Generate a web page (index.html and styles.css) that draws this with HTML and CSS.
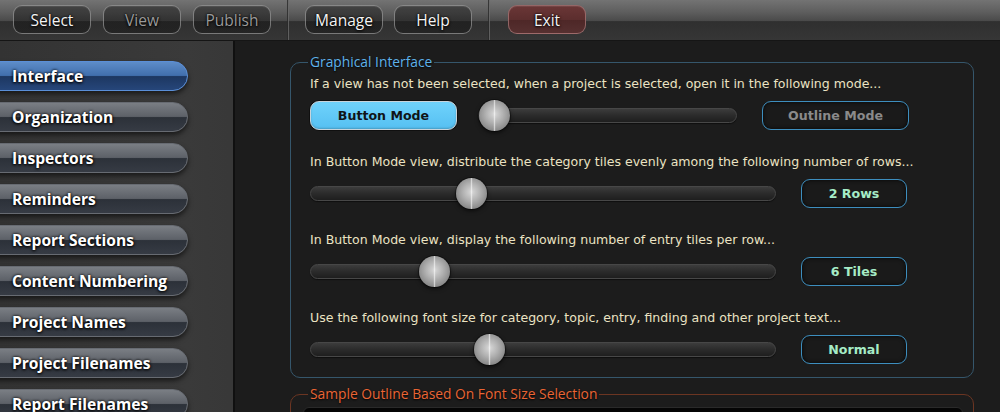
FILE: index.html
```html
<!DOCTYPE html>
<html>
<head>
<meta charset="utf-8">
<link rel="stylesheet" href="styles.css">
</head>
<body>
<div class="app">
  <header class="topbar">
    <div class="group g1">
      <button class="tb">Select</button>
      <button class="tb dis">View</button>
      <button class="tb dis">Publish</button>
    </div>
    <div class="sep"></div>
    <div class="group g2">
      <button class="tb">Manage</button>
      <button class="tb">Help</button>
    </div>
    <div class="sep"></div>
    <div class="group g3">
      <button class="tb exit">Exit</button>
    </div>
  </header>
  <div class="body">
    <nav class="sidebar">
      <div class="pill active">Interface</div>
      <div class="pill">Organization</div>
      <div class="pill">Inspectors</div>
      <div class="pill">Reminders</div>
      <div class="pill">Report Sections</div>
      <div class="pill">Content Numbering</div>
      <div class="pill">Project Names</div>
      <div class="pill">Project Filenames</div>
      <div class="pill">Report Filenames</div>
    </nav>
    <main class="main">
      <fieldset class="box blue">
        <legend>Graphical Interface</legend>
        <div class="sect">
          <p class="q">If a view has not been selected, when a project is selected, open it in the following mode...</p>
          <div class="row">
            <div class="mode on">Button Mode</div>
            <div class="slider s1"><div class="knob" style="left:0px"></div></div>
            <div class="mode off">Outline Mode</div>
          </div>
        </div>
        <div class="sect">
          <p class="q">In Button Mode view, distribute the category tiles evenly among the following number of rows...</p>
          <div class="row">
            <div class="slider s2"><div class="knob" style="left:145px"></div></div>
            <div class="val">2 Rows</div>
          </div>
        </div>
        <div class="sect">
          <p class="q">In Button Mode view, display the following number of entry tiles per row...</p>
          <div class="row">
            <div class="slider s2"><div class="knob" style="left:108px"></div></div>
            <div class="val">6 Tiles</div>
          </div>
        </div>
        <div class="sect">
          <p class="q">Use the following font size for category, topic, entry, finding and other project text...</p>
          <div class="row">
            <div class="slider s2"><div class="knob" style="left:163px"></div></div>
            <div class="val">Normal</div>
          </div>
        </div>
      </fieldset>
      <fieldset class="box orange">
        <legend>Sample Outline Based On Font Size Selection</legend>
        <div class="sample"></div>
      </fieldset>
    </main>
  </div>
</div>
</body>
</html>
```
FILE: styles.css
```css
* { box-sizing: border-box; }
html, body { margin: 0; padding: 0; }
body { width: 1000px; height: 412px; overflow: hidden; background: #1c1c1c; }
.app { width: 1000px; height: 412px; display: flex; flex-direction: column; }

.topbar {
  height: 41px; flex: none; display: flex; align-items: stretch;
  background: linear-gradient(#737373 0%, #5e5e5e 30%, #4a4a4a 52%, #2f2f2f 54%, #363636 100%);
  border-bottom: 1px solid #151515;
}
.group { display: flex; align-items: center; gap: 12px; }
.g1 { padding: 0 16px 0 13px; }
.g2 { padding: 0 16px 0 16px; gap: 11px; }
.g3 { padding: 0 0 0 18px; }
.sep { width: 2px; border-left: 1px solid #2a2a2a; border-right: 1px solid #6a6a6a; opacity: .8; }
.tb {
  width: 78px; height: 29px; margin-top: -1px;
  border: 1px solid rgba(190,190,190,.55); border-radius: 9px;
  background: linear-gradient(rgba(20,20,20,.45) 0%, rgba(20,20,20,.45) 50%, rgba(10,10,10,.35) 52%, rgba(10,10,10,.35) 100%);
  color: #f4f4f4; font-family: "Open Sans", sans-serif; font-size: 15.5px; padding: 0;
  text-shadow: 0 1px 3px #000, 0 0 2px #000;
  box-shadow: inset 0 1px 0 rgba(255,255,255,.08);
}
.tb.dis { color: #9a9a9a; }
.tb.exit {
  background: linear-gradient(#6a3636 0%, #5c2e2e 50%, #4e2727 52%, #563030 100%);
  border-color: rgba(200,150,150,.55);
}

.body { flex: 1; display: flex; min-height: 0; }
.sidebar {
  width: 235px; flex: none; padding-top: 20px;
  background: linear-gradient(90deg, #333 0%, #3a3a3a 80%, #383838 98%);
  border-right: 2px solid #101010;
  display: flex; flex-direction: column; gap: 11px; overflow: hidden;
}
.pill {
  height: 30px; width: 210px; margin-left: -22px; flex: none;
  padding-left: 33px; border-radius: 0 15px 15px 0;
  display: flex; align-items: center;
  font-family: "Open Sans", sans-serif; font-weight: 700; font-size: 15.6px; color: #fff;
  text-shadow: 0 1px 3px #000, 0 0 3px #000;
  border: 1px solid #676b72;
  background: linear-gradient(#7a7e84 0%, #5d6168 48%, #2c3139 52%, #363b44 100%);
  box-shadow: 0 3px 5px rgba(0,0,0,.55);
}
.pill.active {
  border-color: #5a8fd8;
  background: linear-gradient(#5d8cc8 0%, #416fad 48%, #1d3761 52%, #26467a 100%);
}

.main { flex: 1; padding: 13px 0 0 55px; background: #1c1c1c; overflow: hidden; }
.box {
  margin: 0; width: 684px; border-radius: 10px; padding: 6px 0 13px 19px;
}
.box legend {
  font-family: "Open Sans", sans-serif; font-size: 13.8px; line-height: 16px;
  padding: 0 2px; margin-left: -2px;
  text-shadow: 0 1px 2px #000;
}
.blue { border: 1px solid #35566b; }
.blue legend { color: #5fb2ea; }
.orange { border: 1px solid #6b3522; margin-top: 8px; padding-top: 5px; padding-bottom: 40px; }
.orange legend { color: #ea6534; }
.sample { height: 40px; width: 660px; margin-left: -7px; background: #050505; border-radius: 6px; border: 1px solid #2a2a2a; }

.sect { display: flex; flex-direction: column; gap: 9px; }
.sect + .sect { margin-top: 24px; }
.q {
  margin: 0; font-family: "DejaVu Sans", sans-serif; font-size: 12.55px; line-height: 16px;
  color: #ebe3c3; white-space: nowrap;
}
.row { display: flex; align-items: center; height: 29px; gap: 25px; }
.mode, .val {
  height: 29px; border-radius: 9px; display: flex; align-items: center; justify-content: center;
  font-family: "DejaVu Sans", sans-serif; font-weight: 700; font-size: 12.6px;
}
.mode { width: 147px; }
.mode.on {
  background: linear-gradient(#6fd2fb, #56c0f2);
  border: 1px solid #c8d4dc; color: #101418;
  box-shadow: 0 0 0 1px rgba(0,0,0,.4), inset 0 -1px 2px rgba(0,0,0,.2);
}
.mode.off, .val {
  background: #1a1a1a; border: 1.5px solid #3d8ebe; color: #8a8a8a;
  box-shadow: inset 0 0 4px rgba(0,0,0,.8);
}
.val { width: 106px; color: #a6ecc6; }
.row .mode.on + .slider { margin-left: -4px; }
.slider {
  position: relative; height: 15px; border-radius: 8px;
  background: linear-gradient(#3c3c3c 0%, #2b2b2b 50%, #1e1e1e 100%);
  border: 1px solid #474747;
  box-shadow: 0 1px 1px rgba(0,0,0,.5);
}
.s1 { width: 259px; }
.s2 { width: 466px; }
.knob {
  position: absolute; top: -9px; width: 31px; height: 31px; border-radius: 50%;
  background:
    linear-gradient(90deg, transparent 46%, rgba(255,255,255,.55) 50%, transparent 54%),
    radial-gradient(circle at 50% 45%, #d8d8d8 0%, #b4b4b4 35%, #8c8c8c 70%, #6a6a6a 100%);
  box-shadow: 0 0 0 1px rgba(0,0,0,.35), 0 2px 4px rgba(0,0,0,.6);
}
```
